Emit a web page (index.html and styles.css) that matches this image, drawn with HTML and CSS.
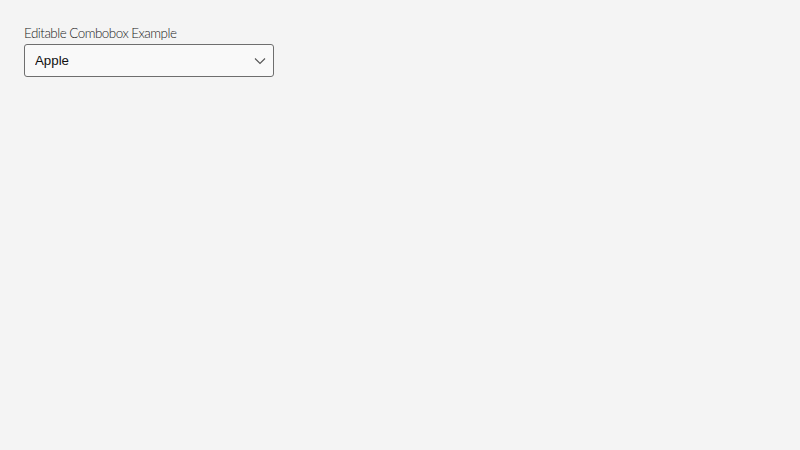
FILE: index.html
```html
<!DOCTYPE html>
<html>
<head>
<meta charset="utf-8">
<link rel="stylesheet" href="styles.css">
</head>
<body>
<div class="field">
  <label class="label" for="combo">Editable Combobox Example</label>
  <div class="combo">
    <input id="combo" class="combo-input" type="text" value="Apple">
    <svg class="chevron" width="12" height="8" viewBox="0 0 12 8"><path d="M1 1.5 L6 6.5 L11 1.5" fill="none" stroke="#555" stroke-width="1.1"/></svg>
  </div>
</div>
</body>
</html>
```
FILE: styles.css
```css
html, body {
  margin: 0;
  padding: 0;
  background: #f4f4f4;
}
body {
  padding: 25px 24px;
}
.field {
  display: flex;
  flex-direction: column;
  gap: 3px;
  width: 250px;
}
.label {
  font-family: Lato, "Open Sans", sans-serif;
  font-weight: 300;
  font-size: 13.4px;
  letter-spacing: -0.5px;
  line-height: 16px;
  color: #222;
}
.combo {
  box-sizing: border-box;
  display: flex;
  align-items: center;
  height: 33px;
  border: 1.5px solid #6e6e6e;
  border-radius: 3px;
  background: #f9f9f9;
  padding: 0 6px 0 10px;
}
.combo-input {
  flex: 1;
  min-width: 0;
  border: none;
  outline: none;
  background: transparent;
  font-family: "Liberation Sans", Arial, sans-serif;
  font-size: 13.3px;
  color: #111;
  padding: 0;
}
.chevron {
  flex: none;
  margin-right: 1px;
}
```
